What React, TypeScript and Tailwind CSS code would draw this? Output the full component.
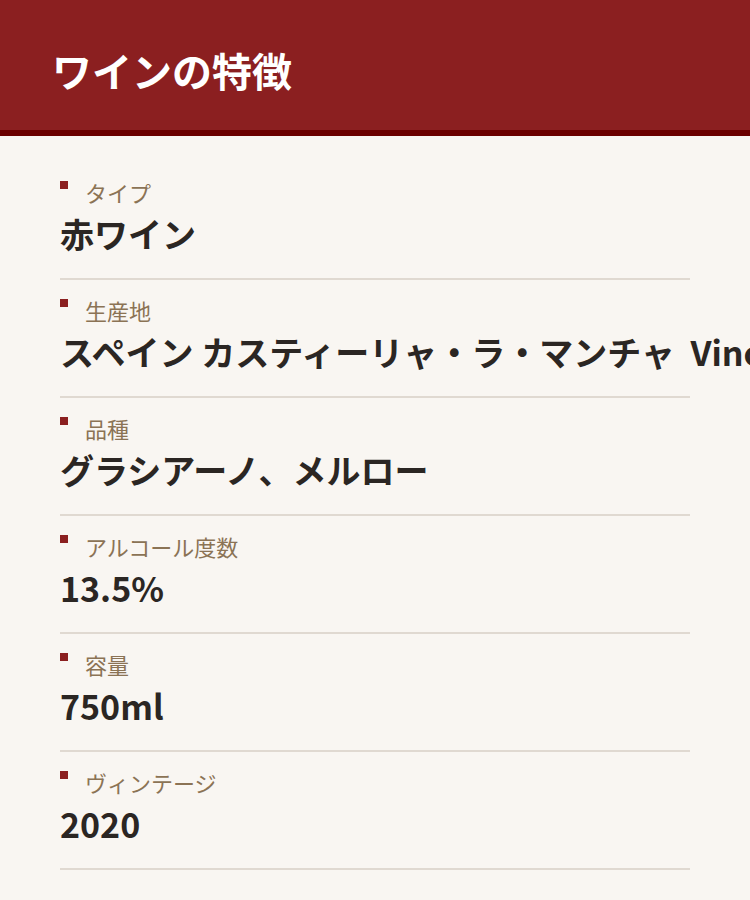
export default function App() {
  const items = [
    { label: "タイプ", value: "赤ワイン" },
    { label: "生産地", value: "スペイン カスティーリャ・ラ・マンチャ  Vino de la Tierra de Castilla" },
    { label: "品種", value: "グラシアーノ、メルロー" },
    { label: "アルコール度数", value: "13.5%" },
    { label: "容量", value: "750ml" },
    { label: "ヴィンテージ", value: "2020" },
  ];

  return (
    <div
      className="min-h-[900px] w-[750px] overflow-hidden bg-[#f9f6f2]"
      style={{ fontFamily: '"Noto Sans CJK JP", "Noto Sans", sans-serif' }}
    >
      {/* Header */}
      <header className="h-[136px] bg-[#8b1f20] border-b-[6px] border-[#6b0000] px-[52px] flex items-center">
        <h2 className="text-[40px] font-bold leading-none text-white pt-[10px]">ワインの特徴</h2>
      </header>

      {/* Spec list */}
      <dl className="px-[60px] pt-[26px]">
        {items.map((item) => (
          <div key={item.label} className="w-[630px] pt-[14px] pb-[18px] border-b-2 border-[#e0d9d1]">
            <dt className="flex items-start gap-[17px] h-[33px] text-[22px] leading-[33px] text-[#8b7355]">
              <span className="mt-[5px] w-[8px] h-[8px] bg-[#8b1f20] shrink-0" />
              <span>{item.label}</span>
            </dt>
            <dd className="h-[51px] text-[34px] leading-[49px] font-bold text-[#2b2623] whitespace-pre">
              {item.value}
            </dd>
          </div>
        ))}
      </dl>
    </div>
  );
}
